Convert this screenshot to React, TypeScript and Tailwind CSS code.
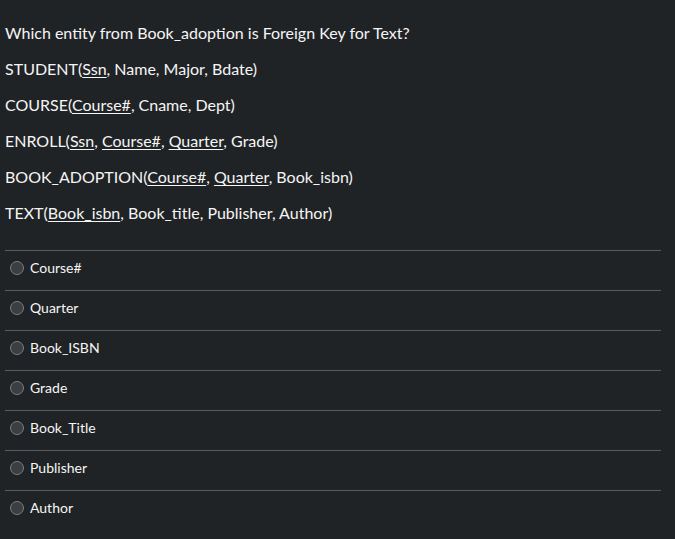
import React from 'react';

const options = ['Course#', 'Quarter', 'Book_ISBN', 'Grade', 'Book_Title', 'Publisher', 'Author'];

const U: React.FC<{ children: React.ReactNode }> = ({ children }) => (
  <span className="underline underline-offset-2">{children}</span>
);

export default function App() {
  return (
    <div className="min-h-screen w-full bg-[#202325] text-[#f5f5f5] font-['Lato',sans-serif]">
      <div className="pt-[21px] pl-[5px] pr-[14px]">
        <div className="text-[16px] leading-[24px]">
          <p className="mb-3">Which entity from Book_adoption is Foreign Key for Text?</p>
          <p className="mb-3">
            STUDENT(<U>Ssn</U>, Name, Major, Bdate)
          </p>
          <p className="mb-3">
            COURSE(<U>Course#</U>, Cname, Dept)
          </p>
          <p className="mb-3">
            ENROLL(<U>Ssn</U>, <U>Course#</U>, <U>Quarter</U>, Grade)
          </p>
          <p className="mb-3">
            BOOK_ADOPTION(<U>Course#</U>, <U>Quarter</U>, Book_isbn)
          </p>
          <p>
            TEXT(<U>Book_isbn</U>, Book_title, Publisher, Author)
          </p>
        </div>
        <div className="mt-[25px]">
          {options.map((o) => (
            <label
              key={o}
              className="flex h-10 items-center border-t border-[#5a5d60] pb-[6px] pl-[5px] text-[14px]"
            >
              <span className="mr-[6px] h-[14px] w-[14px] rounded-full border border-[#7a7d80] bg-[#3c3f41]" />
              <span>{o}</span>
            </label>
          ))}
        </div>
      </div>
    </div>
  );
}
